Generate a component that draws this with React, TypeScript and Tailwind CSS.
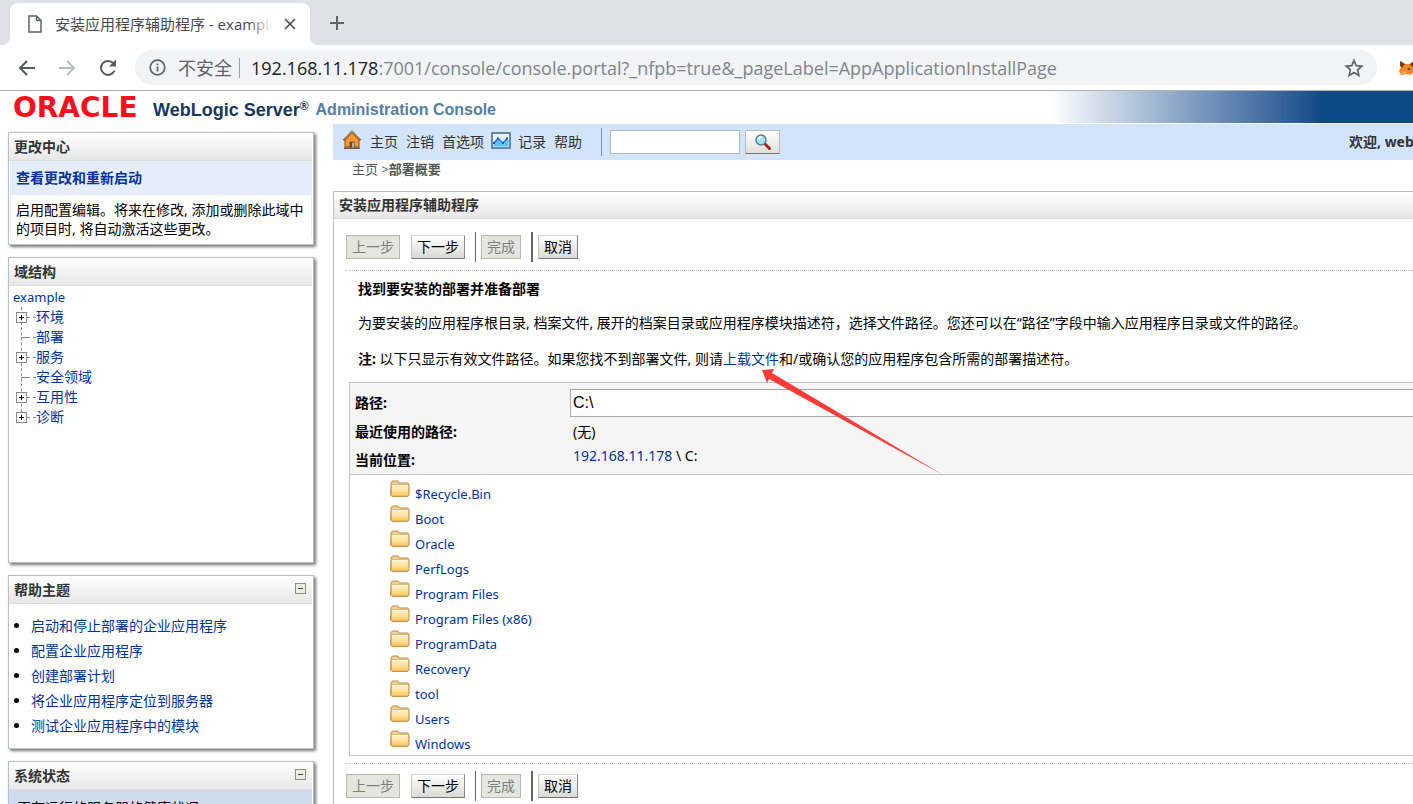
import type { ReactNode } from 'react';

const treeItems = [
  { label: '环境', expandable: true },
  { label: '部署', expandable: false },
  { label: '服务', expandable: true },
  { label: '安全领域', expandable: false },
  { label: '互用性', expandable: true },
  { label: '诊断', expandable: true },
];

const helpTopics = [
  '启动和停止部署的企业应用程序',
  '配置企业应用程序',
  '创建部署计划',
  '将企业应用程序定位到服务器',
  '测试企业应用程序中的模块',
];

const folders = ['$Recycle.Bin', 'Boot', 'Oracle', 'PerfLogs', 'Program Files', 'Program Files (x86)', 'ProgramData', 'Recovery', 'tool', 'Users', 'Windows'];

function FolderIcon() {
  return (
    <svg width="20" height="18" viewBox="0 0 20 18" className="shrink-0" aria-hidden="true">
      <defs>
        <linearGradient id="folder" x1="0" y1="0" x2="0" y2="1">
          <stop offset="0" stopColor="#fff3cb" />
          <stop offset="0.5" stopColor="#ffe3a0" />
          <stop offset="1" stopColor="#fdc45c" />
        </linearGradient>
      </defs>
      <path d="M1 4.5V2.8L2.4 1h5.4l1.6 2h8.2l1.4 1.2V15L17.600 16.500H2L.6 15z" fill="#f0cf96" stroke="#bd8b48" />
      <path d="M1.500 4.500h17v10.300l-1.200 1.200H2.700l-1.200-1.200z" fill="url(#folder)" stroke="#dca553" strokeWidth="0.8" />
      <path d="M2.500 5.400h15" stroke="#fffbe8" />
    </svg>
  );
}

function HomeIcon() {
  return (
    <svg width="20" height="20" viewBox="0 0 20 20" className="mb-1" aria-hidden="true">
      <path d="M3 9l7-7 7 7v9H3z" fill="#f79a33" stroke="#8a4b1c" />
      <path d="M4 16h12v1.500H4z" fill="#c4611a" />
      <path d="M7.500 17.500v-6h5v6z" fill="#6b4a33" />
      <path d="M10 12.500h2v5h-2z" fill="#a9b7bf" />
      <path d="M1.500 10.500L10 2l8.500 8.500" fill="none" stroke="#8d5a3a" strokeWidth="2.400" />
      <path d="M2.500 9L10 1.600 17.500 9" fill="none" stroke="#f4b56a" strokeWidth="0.800" />
      <path d="M2 18.500h16" stroke="#655549" />
    </svg>
  );
}

function ChartIcon() {
  return (
    <svg width="20" height="17" viewBox="0 0 20 17" className="mb-1" aria-hidden="true">
      <rect x="1" y="1" width="18" height="15" fill="#e4f4fd" stroke="#4f6f90" strokeWidth="1.600" />
      <path d="M2.500 11L7 7l5 4 4-4 1.500 1v6.500h-15z" fill="#5cc3f5" />
      <path d="M3 11l4-4.500 5 4.500 4-4.500" fill="none" stroke="#2459c9" strokeWidth="1.200" />
      <path d="M2 10h2v2H2zM6 5.500h2v2H6zM11 10h2v2h-2zM15 5.500h2v2h-2z" fill="#1d4fd0" />
    </svg>
  );
}

function SearchIcon() {
  return (
    <svg width="18" height="18" viewBox="0 0 18 18" aria-hidden="true">
      <path d="M10.500 10.500l5 5" stroke="#a8221f" strokeWidth="3" strokeLinecap="round" />
      <circle cx="7" cy="7" r="5" fill="#a6e2f0" stroke="#5c7f92" strokeWidth="1.500" />
      <path d="M4 6.500Q5 3.800 8 4" fill="none" stroke="#fff" strokeWidth="1.500" />
    </svg>
  );
}

function FoxIcon() {
  return (
    <svg width="16" height="16" viewBox="0 0 16 16" aria-hidden="true">
      <path d="M1 1l5 3h5l4-3v10l-3 4-4-1-6 1-2-4 2-4z" fill="#f0862b" />
      <path d="M1 1l5 3-3 4-2-2z" fill="#7a3c18" />
      <path d="M11 4l4-3v6l-3-1z" fill="#7a3c18" />
      <path d="M8 9l3-1v2z" fill="#2f2a28" />
      <path d="M2 12l4-1 2 3-6 1z" fill="#fba44c" />
    </svg>
  );
}

function CollapseButton() {
  return (
    <button aria-label="折叠" className="mr-1 mb-[2px] flex size-[11px] items-center justify-center border border-[#8b9287] bg-[#e9ede3]">
      <span className="h-px w-[5px] bg-[#444]" />
    </button>
  );
}

function Portlet({ title, collapsible, className, children }: { title: string; collapsible?: boolean; className?: string; children: ReactNode }) {
  return (
    <section className={`shrink-0 border border-[#b9c0c4] bg-white shadow-[2px_2px_3px_#777] ${className ?? ''}`}>
      <div className="mr-px flex h-7 items-center justify-between border-b border-[#dcdfdc] bg-linear-to-b from-white to-[#e6e7e6] pr-[2px] pl-[5px]">
        <h2 className="text-sm leading-5 font-bold text-[#333]">{title}</h2>
        {collapsible && <CollapseButton />}
      </div>
      {children}
    </section>
  );
}

function WizardButtons() {
  const base = 'h-6 border px-[5px] text-sm leading-5 whitespace-nowrap';
  const on = 'border-t-[#d5d5d0] border-l-[#c4c4be] border-r-[#888] border-b-[#777] bg-linear-to-b from-white to-[#d9dad5] text-black';
  const off = 'border-[#b5b8b0] bg-[#e4e5df] text-[#7f7f7f]';
  return (
    <div className="flex h-[30px] items-center pl-px">
      <button disabled className={`${base} ${off}`}>上一步</button>
      <button className={`${base} ${on} ml-[11px]`}>下一步</button>
      <span className="ml-[10px] h-[30px] w-px bg-[#666]" />
      <button disabled className={`${base} ${off} ml-[5px]`}>完成</button>
      <span className="ml-[10px] h-[30px] w-[2px] bg-[#666]" />
      <button className={`${base} ${on} ml-[5px]`}>取消</button>
    </div>
  );
}

function BrowserChrome() {
  return (
    <header className="shrink-0 font-['Open_Sans','Noto_Sans_CJK_SC',sans-serif]">
      <div className="flex h-[45px] items-end bg-[#dee1e6] pl-[2px]">
        <svg width="8" height="8" viewBox="0 0 8 8" aria-hidden="true"><path d="M8 0v8H0a8 8 0 0 0 8-8z" fill="#fff" /></svg>
        <div className="flex h-[42px] w-[300px] items-center rounded-t-lg bg-white pr-[14px] pl-[18px]">
          <svg width="14" height="18" viewBox="0 0 14 18" fill="none" stroke="#5f6368" strokeWidth="1.500" className="shrink-0" aria-hidden="true">
            <path d="M1 1h7.500L13 5.500V17H1zM8.500 1v4.500H13" />
          </svg>
          <div className="relative ml-[13px] min-w-0 flex-1 overflow-hidden text-[15px] leading-6 whitespace-nowrap text-[#45494d]">
            安装应用程序辅助程序 - example
            <span className="absolute inset-y-0 right-0 w-6 bg-linear-to-r from-transparent to-white" />
          </div>
          <button aria-label="关闭" className="ml-3">
            <svg width="12" height="12" viewBox="0 0 12 12" stroke="#45494d" strokeWidth="1.600" aria-hidden="true"><path d="M1 1l10 10M11 1L1 11" /></svg>
          </button>
        </div>
        <svg width="8" height="8" viewBox="0 0 8 8" aria-hidden="true"><path d="M0 0v8h8a8 8 0 0 1-8-8z" fill="#fff" /></svg>
        <button aria-label="新标签页" className="mb-[14px] ml-[11px]">
          <svg width="16" height="16" viewBox="0 0 16 16" stroke="#5f6368" strokeWidth="2" aria-hidden="true"><path d="M8 1v14M1 8h14" /></svg>
        </button>
      </div>
      <div className="flex h-[46px] items-center overflow-hidden border-b border-[#b0b2b4] bg-white pl-[18px]">
        <button aria-label="后退"><svg width="18" height="18" viewBox="0 0 18 18" fill="none" stroke="#55595d" strokeWidth="2" aria-hidden="true"><path d="M17 9H2.500M9 2L2 9l7 7" /></svg></button>
        <button aria-label="前进" className="ml-[22px]"><svg width="18" height="18" viewBox="0 0 18 18" fill="none" stroke="#bcbfc2" strokeWidth="2" aria-hidden="true"><path d="M1 9h14.500M9 2l7 7-7 7" /></svg></button>
        <button aria-label="刷新" className="ml-[22px]">
          <svg width="20" height="20" viewBox="0 0 20 20" aria-hidden="true">
            <path d="M16.500 12.500A7 7 0 1 1 15.200 5.200" fill="none" stroke="#55595d" strokeWidth="2" />
            <path d="M18 1.500v7h-7z" fill="#55595d" />
          </svg>
        </button>
        <div className="ml-[17px] flex h-[35px] min-w-0 flex-1 items-center rounded-full bg-[#f1f3f4] pr-[13px] pl-[14px] text-lg text-[#80868b]">
          <svg width="17" height="17" viewBox="0 0 17 17" className="shrink-0" aria-hidden="true">
            <circle cx="8.500" cy="8.500" r="7.300" fill="none" stroke="#5f6368" strokeWidth="1.700" />
            <path d="M7.600 7.500h1.800v5H7.600zM7.600 4.500h1.800v1.800H7.600z" fill="#5f6368" />
          </svg>
          <span className="ml-3 shrink-0 text-[#5f6368]">不安全</span>
          <span className="mx-[7px] h-5 w-px shrink-0 bg-[#9aa0a6]" />
          <span className="ml-1 min-w-0 flex-1 truncate"><span className="text-[#202124]">192.168.11.178</span>:7001/console/console.portal?_nfpb=true&amp;_pageLabel=AppApplicationInstallPage</span>
          <svg width="20" height="20" viewBox="0 0 20 20" fill="none" stroke="#5f6368" strokeWidth="1.700" className="shrink-0" aria-hidden="true">
            <path d="M10 2.500l2.200 5.200 5.600.5-4.200 3.700 1.200 5.500-4.800-2.900-4.800 2.900 1.200-5.500-4.200-3.700 5.600-.5z" />
          </svg>
        </div>
        <div className="ml-[22px] w-[14px] shrink-0 overflow-hidden"><div className="w-4"><FoxIcon /></div></div>
      </div>
    </header>
  );
}

function Sidebar() {
  return (
    <aside className="mt-2 ml-2 flex w-[306px] shrink-0 flex-col gap-3">
      <Portlet title="更改中心" className="h-[113px]">
        <div className="mx-px bg-[#e6edfa] px-[6px] py-[7px] text-sm leading-5 font-bold"><a href="#" className="text-[#039]">查看更改和重新启动</a></div>
        <p className="mx-px border-x border-[#e6edfa] px-[5px] pt-[5px] text-sm leading-[19px]">启用配置编辑。将来在修改, 添加或删除此域中的项目时, 将自动激活这些更改。</p>
      </Portlet>
      <Portlet title="域结构" className="h-[306px]">
        <div className="pt-px pl-1 text-sm leading-5 text-[#039]">
          <a href="#" className="block text-[13px] leading-5">example</a>
          <ul className="relative">
            <li aria-hidden="true" className="absolute top-0 bottom-[10px] left-2 border-l border-dashed border-[#888]" />
            {treeItems.map((item) => (
              <li key={item.label} className="relative flex h-5 items-center pl-[3px]">
                {item.expandable ? (
                  <button aria-label="展开" className="flex size-[11px] items-center justify-center border border-[#888] bg-white">
                    <svg width="7" height="7" viewBox="0 0 7 7" stroke="#000" aria-hidden="true"><path d="M3.500 1v5M1 3.500h5" /></svg>
                  </button>
                ) : (
                  <span className="ml-[5px] w-[6px] border-t border-dashed border-[#888]" />
                )}
                <span className="w-[9px] border-t border-dashed border-[#888]" />
                <a href="#">{item.label}</a>
              </li>
            ))}
          </ul>
        </div>
      </Portlet>
      <Portlet title="帮助主题" collapsible className="h-[174px]">
        <ul className="list-disc pt-[9px] pl-[22px] text-sm leading-[25px] marker:text-black">
          {helpTopics.map((topic) => (
            <li key={topic}><a href="#" className="text-[#039]">{topic}</a></li>
          ))}
        </ul>
      </Portlet>
      <Portlet title="系统状态" collapsible>
        <div className="mr-px bg-[#cfdcf0] px-2 py-2 text-sm leading-5">正在运行的服务器的健康状况</div>
      </Portlet>
    </aside>
  );
}

function ConsoleToolbar() {
  return (
    <nav className="flex h-9 items-center bg-[#d2e4f9] pl-[9px] text-sm leading-5 whitespace-nowrap text-[#333]">
      <HomeIcon />
      <a href="#" className="ml-2">主页</a>
      <a href="#" className="ml-2">注销</a>
      <a href="#" className="mr-[7px] ml-2">首选项</a>
      <ChartIcon />
      <a href="#" className="ml-[7px]">记录</a>
      <a href="#" className="ml-2">帮助</a>
      <span className="ml-[19px] h-7 w-px bg-[#7b8ea5]" />
      <input type="text" aria-label="搜索" className="ml-2 h-6 w-[130px] border border-[#b5b8b0] bg-white px-1" />
      <button aria-label="查找" className="ml-[5px] flex h-6 w-[35px] items-center justify-center border border-[#b9bbb5] border-b-[#777] bg-linear-to-b from-white to-[#dfe0db]"><SearchIcon /></button>
      <span className="ml-auto w-16 shrink-0 overflow-hidden font-bold">欢迎, weblogic</span>
    </nav>
  );
}

function InstallAssistant() {
  return (
    <section className="relative border-t border-l border-[#b9c0c4] bg-white">
      <div className="flex h-[27px] items-center border-b border-[#dcdfdc] bg-linear-to-b from-white to-[#e5e6e5] pl-[5px]">
        <h1 className="text-sm leading-5 font-bold text-[#333]">安装应用程序辅助程序</h1>
      </div>
      <div className="pl-[11px]">
        <div className="border-b border-dotted border-[#bbb] pt-[13px] pb-2"><WizardButtons /></div>
        <div className="pt-2 pl-[13px] text-sm leading-5 whitespace-nowrap">
          <h3 className="font-bold">找到要安装的部署并准备部署</h3>
          <p className="mt-[14px]">为要安装的应用程序根目录, 档案文件, 展开的档案目录或应用程序模块描述符，选择文件路径。您还可以在“路径”字段中输入应用程序目录或文件的路径。</p>
          <p className="mt-4"><b>注:</b> 以下只显示有效文件路径。如果您找不到部署文件, 则请<a href="#" className="text-[#039]">上载文件</a>和/或确认您的应用程序包含所需的部署描述符。</p>
        </div>
        <div className="mt-[13px] ml-1 border border-r-0 border-[#c4c4c4] text-sm leading-5">
          <div className="border-b border-[#c4c4c4] bg-[#f5f5f5] pt-[6px] pb-1 pl-[5px]">
            <div className="flex items-center">
              <label htmlFor="path" className="w-[215px] shrink-0 font-bold">路径:</label>
              <input id="path" type="text" defaultValue="C:\" className="h-7 min-w-0 flex-1 border border-r-0 border-[#a9a9a9] bg-white px-[2px] font-['Liberation_Sans',sans-serif] text-base" />
            </div>
            <div className="mt-[5px] flex">
              <span className="w-[218px] shrink-0 font-bold">最近使用的路径:</span>
              <span>(无)</span>
            </div>
            <div className="mt-1 flex">
              <span className="w-[218px] shrink-0 pt-1 font-bold">当前位置:</span>
              <span><a href="#" className="text-[#039]">192.168.11.178</a> \ C:</span>
            </div>
          </div>
          <ul className="pt-[5px] pl-10 text-[13px] leading-5">
            {folders.map((name) => (
              <li key={name} className="flex h-[25px] items-start">
                <FolderIcon />
                <a href="#" className="ml-[5px] pt-1 text-[#039]">{name}</a>
              </li>
            ))}
          </ul>
        </div>
        <div className="mt-[7px] border-t border-dotted border-[#bbb] pt-[7px] pb-4"><WizardButtons /></div>
      </div>
      <svg width="182" height="108" viewBox="0 0 182 108" className="pointer-events-none absolute top-[177px] left-[428px]" aria-hidden="true">
        <path d="M0 1l12-1-2 4 172 102.500L7 10l-2 4z" fill="#fc3a38" />
      </svg>
    </section>
  );
}

export default function App() {
  return (
    <div className="flex h-screen flex-col overflow-hidden bg-white font-['Noto_Sans','Noto_Sans_CJK_SC',sans-serif] text-black">
      <BrowserChrome />
      <div className="flex h-[33px] shrink-0 items-center bg-white pl-[13px] font-['Liberation_Sans',sans-serif] font-bold whitespace-nowrap">
        <span className="w-[140px] font-['DejaVu_Sans',sans-serif] text-[28px] leading-8 text-[#fb0f1c]">ORACLE</span>
        <span className="pt-1 text-lg leading-5 text-[#17375e]">WebLogic Server<sup className="text-xs">®</sup></span>
        <span className="ml-[7px] pt-1 text-base leading-5 text-[#557da6]">Administration Console</span>
        <span className="ml-auto h-8 w-[363px] self-start bg-linear-to-r from-white to-[#0d4987] to-75%" />
      </div>
      <div className="flex min-h-0 flex-1">
        <Sidebar />
        <main className="ml-[19px] min-w-0 flex-1">
          <ConsoleToolbar />
          <div className="h-[31px] pl-[19px] text-[13px] leading-[18px] text-[#555]"><a href="#">主页</a> &gt;<b>部署概要</b></div>
          <InstallAssistant />
        </main>
      </div>
    </div>
  );
}
